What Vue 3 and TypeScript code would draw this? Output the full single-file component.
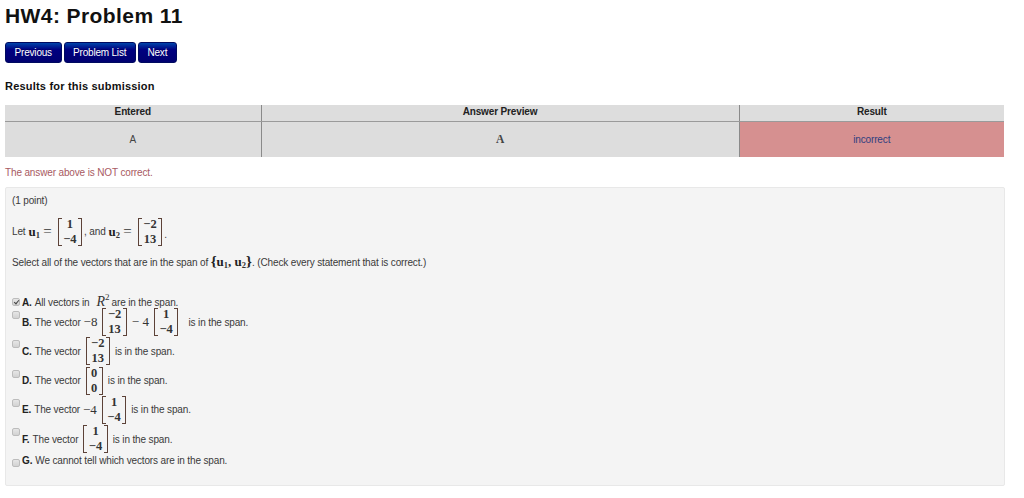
<script setup lang="ts">
interface Part { t?: string; m?: string[]; math?: boolean }
interface Choice { label: string; parts: Part[]; checked?: boolean }
const u1 = ['1', '−4']
const u2 = ['−2', '13']
const zero = ['0', '0']
const choices: Choice[] = [
  { label: 'B.', parts: [{ t: 'The vector' }, { t: '−8', math: true }, { m: u2 }, { t: '− 4', math: true }, { m: u1 }, { t: '  is in the span.' }] },
  { label: 'C.', parts: [{ t: 'The vector' }, { m: u2 }, { t: 'is in the span.' }] },
  { label: 'D.', parts: [{ t: 'The vector' }, { m: zero }, { t: 'is in the span.' }] },
  { label: 'E.', parts: [{ t: 'The vector' }, { t: '−4', math: true }, { m: u1 }, { t: 'is in the span.' }] },
  { label: 'F.', parts: [{ t: 'The vector' }, { m: u1 }, { t: 'is in the span.' }] },
]
</script>

<template>
  <main class="page">
    <h1 class="title">HW4: Problem 11</h1>
    <nav class="nav">
      <a class="btn">Previous</a>
      <a class="btn">Problem List</a>
      <a class="btn">Next</a>
    </nav>
    <h2 class="sub">Results for this submission</h2>
    <table class="results">
      <thead>
        <tr><th class="c1">Entered</th><th class="c2">Answer Preview</th><th class="c3">Result</th></tr>
      </thead>
      <tbody>
        <tr><td>A</td><td class="preview">A</td><td class="bad">incorrect</td></tr>
      </tbody>
    </table>
    <p class="msg">The answer above is NOT correct.</p>
    <section class="panel">
      <p class="point">(1 point)</p>
      <div class="let">
        <span>Let</span>
        <span class="math"><b>u</b><sub>1</sub> <span class="eq">=</span></span>
        <span class="matrix"><span v-for="v in u1" :key="v">{{ v }}</span></span>
        <span class="comma">, and</span>
        <span class="math"><b>u</b><sub>2</sub> <span class="eq">=</span></span>
        <span class="matrix"><span v-for="v in u2" :key="v">{{ v }}</span></span>
        <span class="dot">.</span>
      </div>
      <p class="select">Select all of the vectors that are in the span of <span class="math set"><b class="brace">{</b><b>u</b><sub>1</sub><b>,</b> <b>u</b><sub>2</sub><b class="brace">}</b></span>. (Check every statement that is correct.)</p>
      <label class="choice first">
        <input type="checkbox" checked class="check" />
        <b>A.</b><span>All vectors in</span>
        <span class="math r"><i>R</i><sup>2</sup></span><span>are in the span.</span>
      </label>
      <label v-for="c in choices" :key="c.label" class="choice tall">
        <input type="checkbox" class="check" />
        <b>{{ c.label }}</b>
        <template v-for="(p, i) in c.parts" :key="i">
          <span v-if="p.m" class="matrix"><span v-for="v in p.m" :key="v + i">{{ v }}</span></span>
          <span v-else :class="{ math: p.math }">{{ p.t }}</span>
        </template>
      </label>
      <label class="choice last">
        <input type="checkbox" class="check" />
        <b>G.</b><span>We cannot tell which vectors are in the span.</span>
      </label>
    </section>
  </main>
</template>

<style scoped>
.page {
  width: 1024px;
  height: 498px;
  box-sizing: border-box;
  padding: 5px 19px 0 5px;
  overflow: hidden;
  font-family: "Liberation Sans", Arial, sans-serif;
  font-size: 10px;
  letter-spacing: -0.14px;
  color: #3a3a3a;
  background: #fff;
}
.title {
  margin: 0;
  font-size: 21px;
  line-height: 22px;
  font-weight: 700;
  letter-spacing: 0.42px;
  color: #111;
}
.nav {
  display: flex;
  gap: 2px;
  margin-top: 15px;
}
.btn {
  box-sizing: border-box;
  height: 21px;
  padding: 0 8.6px;
  display: flex;
  align-items: center;
  border-radius: 3px;
  border: 1px solid #000a60;
  background: linear-gradient(#0044aa, #000080 35%, #000070);
  color: #fff;
  font-size: 10px;
  letter-spacing: -0.2px;
  text-shadow: 0 -1px 0 rgba(0, 0, 0, 0.25);
}
.sub {
  margin: 17px 0 0;
  font-size: 11px;
  line-height: 12px;
  font-weight: 700;
  letter-spacing: 0.2px;
  color: #111;
}
.results {
  margin-top: 13px;
  width: 999px;
  border-collapse: collapse;
  table-layout: fixed;
  background: #ddd;
}
.results th {
  height: 16px;
  padding: 0 0 2px;
  box-sizing: border-box;
  font-size: 10px;
  font-weight: 700;
  color: #222;
  border-bottom: 1px solid #9a9a9a;
}
.results td {
  height: 35px;
  padding: 0;
  text-align: center;
  color: #444;
}
.results th + th,
.results td + td {
  border-left: 1px solid #8a8a8a;
}
.c1 { width: 256px; }
.c2 { width: 478px; }
.preview {
  font-family: "Liberation Serif", serif;
  font-size: 11.5px;
  font-weight: 700;
  color: #222;
}
.results td.bad {
  background: #d69090;
  color: #2f3f80;
}
.msg {
  margin: 10px 0 0;
  line-height: 12px;
  color: #a85a62;
}
.panel {
  box-sizing: border-box;
  margin-top: 8px;
  width: 1000px;
  height: 299px;
  padding: 7px 6px 0;
  background: #f4f4f4;
  border: 1px solid #e8e8e8;
  border-radius: 2px;
}
.point {
  margin: 0;
  line-height: 12px;
}
.let {
  display: flex;
  align-items: center;
  gap: 3px;
  height: 29px;
  margin-top: 10.5px;
}
.math {
  font-family: "Liberation Serif", serif;
  font-size: 13px;
  letter-spacing: 0;
  color: #333;
  white-space: pre;
}
.math b { color: #222; }
.math sub { font-size: 8.5px; font-weight: 700; line-height: 0; vertical-align: -2px; }
.math sup { font-size: 9px; line-height: 0; }
.eq { font-size: 15px; line-height: 0; }
.matrix {
  position: relative;
  box-sizing: border-box;
  display: inline-flex;
  flex-direction: column;
  justify-content: space-between;
  align-items: flex-end;
  height: 28px;
  padding: 0 5.5px;
  margin: 0 1px;
  font-family: "Liberation Serif", serif;
  font-size: 12.5px;
  font-weight: 700;
  line-height: 13px;
  letter-spacing: 0;
  color: #333;
}
.matrix span { display: block; min-width: 6px; text-align: center; align-self: center; }
.matrix::before,
.matrix::after {
  content: "";
  position: absolute;
  top: 0;
  bottom: 0;
  width: 3px;
  border: 1px solid #5c4238;
}
.matrix::before { left: 0; border-right: 0; }
.matrix::after { right: 0; border-left: 0; }
.let .matrix { margin-left: 3px; }
.comma { margin-left: -2px; }
.dot { margin-left: -2px; align-self: flex-end; margin-bottom: 6px; }
.select {
  margin: 8.5px 0 0;
  line-height: 14px;
}
.set { font-size: 13px; }
.brace { font-size: 15px; line-height: 0; }
.choice {
  position: relative;
  display: flex;
  align-items: center;
  gap: 3px;
  padding-left: 10px;
  white-space: pre;
}
.choice b { color: #222; font-weight: 700; }
.first { margin-top: 27px; height: 11px; }
.first .r { margin: 0 -1px 0 4px; font-size: 14px; }
.tall { height: 29.25px; }
.tall .matrix { margin-left: 2px; margin-right: 2px; }
.last { height: 13px; }
.check {
  appearance: none;
  position: absolute;
  left: 0;
  top: 3.5px;
  box-sizing: border-box;
  width: 8px;
  height: 8px;
  margin: 0;
  border: 1px solid #bcbcbc;
  border-radius: 2px;
  background: linear-gradient(#e6e6e6, #d2d2d2);
}
.check:checked::after {
  content: "";
  position: absolute;
  left: 1.5px;
  top: -0.5px;
  width: 2px;
  height: 4px;
  border: solid #444;
  border-width: 0 1.5px 1.5px 0;
  transform: rotate(40deg);
}
.first .check { top: 1.5px; }
.last .check { top: 5px; }
</style>
